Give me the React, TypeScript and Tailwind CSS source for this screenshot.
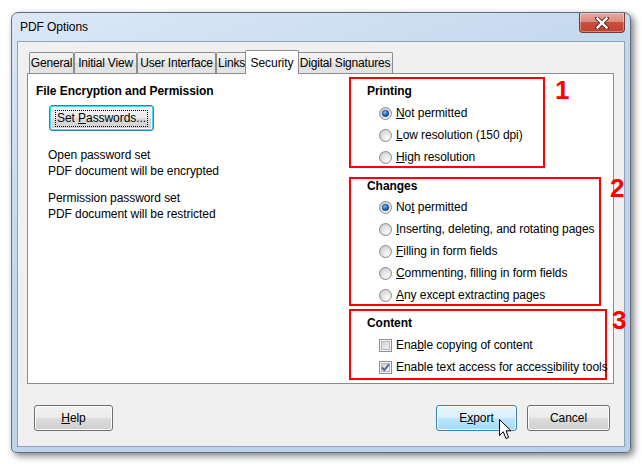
import React from "react";

const font = { fontFamily: '"Liberation Sans", Arial, sans-serif' };

function Radio({ checked }: { checked?: boolean }) {
  return (
    <svg width="13" height="13" viewBox="0 0 13 13" className="shrink-0">
      <defs>
        <radialGradient id="rb" cx="0.65" cy="0.7" r="0.7">
          <stop offset="0" stopColor="#fdfdfd" />
          <stop offset="1" stopColor="#cfd0d2" />
        </radialGradient>
        <radialGradient id="rd" cx="0.4" cy="0.35" r="0.7">
          <stop offset="0" stopColor="#8cc4f4" />
          <stop offset="0.5" stopColor="#2a6fc4" />
          <stop offset="1" stopColor="#123f7c" />
        </radialGradient>
      </defs>
      <circle cx="6.5" cy="6.5" r="6" fill="url(#rb)" stroke="#8b8c8e" />
      {checked && <circle cx="6.5" cy="6.5" r="3.3" fill="url(#rd)" stroke="#1d4b86" strokeWidth="0.6" />}
    </svg>
  );
}

function Check({ checked }: { checked?: boolean }) {
  return (
    <svg width="13" height="13" viewBox="0 0 13 13" className="shrink-0">
      <defs>
        <linearGradient id="cb" x1="0" y1="0" x2="1" y2="1">
          <stop offset="0" stopColor="#cbcfd5" />
          <stop offset="1" stopColor="#f5f6f7" />
        </linearGradient>
      </defs>
      <rect x="0.5" y="0.5" width="12" height="12" fill="#f4f4f4" stroke="#8e8f8f" />
      <rect x="2.5" y="2.5" width="8" height="8" fill="url(#cb)" stroke="#b4b8be" />
      {checked && (
        <path d="M3 6.3 L5.3 9 L10 3.2" fill="none" stroke="#4c5f8f" strokeWidth="1.8" />
      )}
    </svg>
  );
}

function Option({ kind, checked, children }: { kind: "radio" | "check"; checked?: boolean; children: React.ReactNode }) {
  return (
    <div className="flex items-center h-[18px] ml-[12px] gap-[4px] whitespace-nowrap">
      {kind === "radio" ? <Radio checked={checked} /> : <Check checked={checked} />}
      <span>{children}</span>
    </div>
  );
}

function Btn({ w, hover, focus, children }: { w: string; hover?: boolean; focus?: boolean; children: React.ReactNode }) {
  const border = hover || focus ? "border-[#3c7fb1]" : "border-[#707070]";
  const bg = hover
    ? "bg-[linear-gradient(#eaf6fd,#d9f0fc_50%,#bee6fd_50%,#a7d9f5)]"
    : "bg-[linear-gradient(#f2f2f2,#ebebeb_50%,#dddddd_50%,#cfcfcf)]";
  const glow = focus ? "shadow-[inset_0_0_0_1px_#48d8fb,inset_0_0_0_2px_#ffffff]" : "shadow-[inset_0_0_0_1px_#fcfcfc]";
  return (
    <div className={`${w} h-[26px] rounded-[3px] border ${border} ${bg} ${glow} flex items-center justify-center text-[12px] text-black`}>
      {children}
    </div>
  );
}

function Tab({ w, selected, children }: { w: string; selected?: boolean; children: React.ReactNode }) {
  if (selected)
    return (
      <div className={`${w} h-[24px] -mx-[2px] -mb-px relative z-10 bg-white border border-b-0 border-[#898c95] rounded-t-[2px] flex items-start justify-center pt-[3px] text-[12px]`}>
        {children}
      </div>
    );
  return (
    <div className={`${w} h-[21px] bg-[linear-gradient(#f3f3f3,#ebebeb_50%,#dedede_50%,#e5e5e5)] border border-b-0 border-[#898c95] rounded-t-[2px] flex items-center justify-center text-[12px] whitespace-nowrap tracking-[-0.2px]`}>
      {children}
    </div>
  );
}

export default function App() {
  return (
    <div className="w-[642px] h-[464px] bg-white pt-[12px] pl-[11px] overflow-hidden tracking-[-0.06px]" style={font}>
      <div className="relative w-[620px] h-[441px] rounded-t-[7px] rounded-b-[5px] border border-[#5e6f82] bg-[linear-gradient(160deg,#dbe8f6,#c2d7ee_40%,#b9d1ea)] shadow-[3px_3px_7px_rgba(0,0,0,0.5)] flex flex-col">
        {/* title bar */}
        <div className="h-[28px] flex justify-between items-start">
          <div className="ml-[8px] mt-[6px] text-[12px] text-black leading-[16px]">PDF Options</div>
          <div className="w-[46px] h-[20px] mr-[5px] rounded-b-[4px] border border-t-0 border-[#7b3a33] bg-[linear-gradient(#eaa9a0,#dc8c80_45%,#c9503f_50%,#c2402f)] flex items-center justify-center shadow-[inset_0_0_0_1px_rgba(255,255,255,0.35)]">
            <svg width="14" height="12" viewBox="0 0 14 12">
              <path d="M2 1 L12 11 M12 1 L2 11" stroke="#5a2a25" strokeWidth="4.2" strokeLinecap="square" />
              <path d="M2.5 1.5 L11.5 10.5 M11.5 1.5 L2.5 10.5" stroke="#ffffff" strokeWidth="2.4" strokeLinecap="square" />
            </svg>
          </div>
        </div>
        {/* client area */}
        <div className="mx-[5px] w-[608px] h-[406px] border border-[#8fa2b8] bg-[#f0f0f0] text-[12px] text-black">
          <div className="px-[9px] pt-[8px]">
            <div className="flex items-end h-[23px] pl-[2px]">
              <Tab w="w-[45px]">General</Tab>
              <Tab w="w-[63px]">Initial View</Tab>
              <Tab w="w-[79px]">User Interface</Tab>
              <Tab w="w-[31px]">Links</Tab>
              <Tab w="w-[54px]" selected>Security</Tab>
              <Tab w="w-[96px]">Digital Signatures</Tab>
            </div>
            <div className="w-[587px] h-[311px] bg-white border border-[#898c95] flex">
              {/* left column */}
              <div className="w-[321px] pl-[8px] pt-[9px]">
                <div className="font-bold leading-[16px]">File Encryption and Permission</div>
                <div className="ml-[13px] mt-[6px]">
                  <Btn w="w-[105px]" focus>
                    <span className="border border-dotted border-black px-[1px] leading-[15px]">
                      Set <u>P</u>asswords...
                    </span>
                  </Btn>
                </div>
                <div className="ml-[12px] mt-[16px] leading-[16px]">
                  <div>Open password set</div>
                  <div>PDF document will be encrypted</div>
                  <div className="mt-[11px]">Permission password set</div>
                  <div>PDF document will be restricted</div>
                </div>
              </div>
              {/* right column */}
              <div className="pt-[3px]">
                <div className="relative w-[196px] border-2 border-[#ff0000] pl-[16px] pt-[4px]">
                  <div className="font-bold h-[16px] leading-[16px]">Printing</div>
                  <div className="mt-[5px] flex flex-col gap-[4px]">
                    <Option kind="radio" checked><u>N</u>ot permitted</Option>
                    <Option kind="radio"><u>L</u>ow resolution (150 dpi)</Option>
                    <Option kind="radio"><u>H</u>igh resolution</Option>
                  </div>
                  <div className="absolute left-full top-[-2px] ml-[12px] text-[26px] leading-[26px] font-bold text-[#ff0000]">1</div>
                </div>
                <div className="relative mt-[9px] w-[252px] border-2 border-[#ff0000] pl-[16px]">
                  <div className="font-bold h-[14px] leading-[14px]">Changes</div>
                  <div className="mt-[5px] flex flex-col gap-[4px]">
                    <Option kind="radio" checked>No<u>t</u> permitted</Option>
                    <Option kind="radio"><u>I</u>nserting, deleting, and rotating pages</Option>
                    <Option kind="radio"><u>F</u>illing in form fields</Option>
                    <Option kind="radio"><u>C</u>ommenting, filling in form fields</Option>
                    <Option kind="radio"><u>A</u>ny except extracting pages</Option>
                  </div>
                  <div className="absolute left-full top-[-4px] ml-[11px] text-[26px] leading-[26px] font-bold text-[#ff0000]">2</div>
                </div>
                <div className="relative mt-[3px] w-[258px] border-2 border-[#ff0000] pl-[16px] pt-[4px] pb-[2px]">
                  <div className="font-bold h-[16px] leading-[16px]">Content</div>
                  <div className="mt-[5px] flex flex-col gap-[4px]">
                    <Option kind="check">Ena<u>b</u>le copying of content</Option>
                    <Option kind="check" checked>Enable text access for acces<u>s</u>ibility tools</Option>
                  </div>
                  <div className="absolute left-full top-[-4px] ml-[7px] text-[26px] leading-[26px] font-bold text-[#ff0000]">3</div>
                </div>
              </div>
            </div>
            {/* bottom buttons */}
            <div className="relative mt-[21px] pl-[7px] pr-[5px] flex items-center">
              <Btn w="w-[79px]"><span><u>H</u>elp</span></Btn>
              <div className="flex-1" />
              <div className="relative">
                <Btn w="w-[81px]" hover><span>E<u>x</u>port</span></Btn>
                <svg className="absolute left-[63px] top-[14px]" width="13" height="21" viewBox="0 0 13 21">
                  <path d="M0.5 0.5 L0.5 16.5 L4.3 12.8 L7 19.5 L9.6 18.4 L7 11.8 L12 11.8 Z" fill="#ffffff" stroke="#000000" strokeWidth="1" strokeLinejoin="miter" />
                </svg>
              </div>
              <div className="ml-[10px]">
                <Btn w="w-[83px]">Cancel</Btn>
              </div>
            </div>
          </div>
        </div>
      </div>
    </div>
  );
}
